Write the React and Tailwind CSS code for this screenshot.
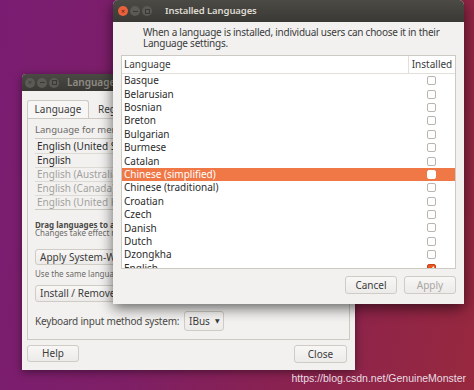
import React from 'react';

const font = { fontFamily: '"Noto Sans", "DejaVu Sans", sans-serif' };

const languages = [
  'Basque', 'Belarusian', 'Bosnian', 'Breton', 'Bulgarian', 'Burmese', 'Catalan',
  'Chinese (simplified)', 'Chinese (traditional)', 'Croatian', 'Czech', 'Danish',
  'Dutch', 'Dzongkha', 'English',
];

const TitleButtons = ({ active }) => (
  <div className="flex items-center gap-[2px]">
    <span className={`w-[10px] h-[10px] rounded-full flex items-center justify-center text-[7px] leading-none ${active ? 'bg-[#e8603c] text-[#5a1a0a]' : 'bg-[#5b5a55] text-[#3a3935]'}`}>×</span>
    <span className="w-[10px] h-[10px] rounded-full bg-[#5b5a55] flex items-center justify-center">
      <span className="w-[5px] h-[1px] bg-[#3a3935]" />
    </span>
    <span className="w-[10px] h-[10px] rounded-full bg-[#5b5a55] flex items-center justify-center">
      <span className="w-[5px] h-[5px] border border-[#3a3935]" />
    </span>
  </div>
);

const Button = ({ children, className = '', disabled }) => (
  <div className={`flex items-center justify-center border border-[#cfcbc5] rounded-[3px] bg-gradient-to-b from-[#f8f7f6] to-[#edebe9] text-[10px] ${disabled ? 'text-[#a8a6a2]' : 'text-[#3c3c3c]'} ${className}`}>
    {children}
  </div>
);

const Checkbox = ({ checked, onOrange }) => (
  <span className={`w-[9px] h-[9px] rounded-[2px] border flex items-center justify-center ${checked ? 'bg-[#e95420] border-[#c4461a]' : onOrange ? 'bg-white border-white' : 'bg-white border-[#b9b5ae]'}`}>
    {checked && (
      <svg width="7" height="7" viewBox="0 0 8 8">
        <path d="M1.2 4.2 L3.2 6.2 L6.8 1.8" stroke="white" strokeWidth="1.6" fill="none" />
      </svg>
    )}
  </span>
);

const BackWindow = () => (
  <div className="absolute left-[22px] top-[74px] w-[333px] h-[296px] flex flex-col bg-[#f2f1f0] rounded-t-[4px] shadow-[0_2px_8px_rgba(0,0,0,0.45)]">
    <div className="h-[17px] bg-gradient-to-b from-[#4a4944] to-[#3a3935] rounded-t-[4px] flex items-center px-[3px] gap-[8px]">
      <TitleButtons />
      <span className="text-[10px] font-semibold text-[#8f8c85]">Language Support</span>
    </div>
    <div className="flex-1 flex flex-col px-[5px] pt-[9px]">
      <div className="flex text-[10px] text-[#3c3c3c]">
        <div className="w-[62px] h-[18px] border border-b-0 border-[#cdc9c3] rounded-t-[3px] bg-[#f7f6f5] flex items-center justify-center">Language</div>
        <div className="px-[9px] h-[18px] flex items-center">Regional Formats</div>
      </div>
      <div className="h-[222px] border border-[#cdc9c3] bg-[#f2f1f0] flex flex-col px-[7px] pt-[4px] text-[#3c3c3c]">
        <div className="text-[9.5px] text-[#6c6a66]">Language for menus and windows:</div>
        <div className="mt-[1px] border-y border-[#cdc9c3] text-[10px]">
          {['English (United States)', 'English', 'English (Australia)', 'English (Canada)', 'English (United Kingdom)'].map((l, i) => (
            <div key={l} className={`h-[14px] flex items-center pl-[2px] ${i > 0 ? 'border-t border-[#dedad5]' : ''} ${i > 1 ? 'text-[#a3a19d]' : 'text-[#2c2c2c]'}`}>{l}</div>
          ))}
        </div>
        <div className="mt-[11px] text-[8px] leading-[8px] font-bold text-[#4a4946]">Drag languages to arrange them in order of preference.</div>
        <div className="text-[8px] leading-[8px] text-[#6c6a66]">Changes take effect next time you log in.</div>
        <Button className="mt-[12px] w-[150px] h-[16px] justify-start pl-[4px]">Apply System-Wide</Button>
        <div className="mt-[3px] text-[8px] text-[#6c6a66]">Use the same language choices for startup and the login screen.</div>
        <Button className="mt-[5px] w-[180px] h-[17px] justify-start pl-[4px]">Install / Remove Languages...</Button>
        <div className="mt-[9px] flex items-center gap-[5px]">
          <span className="text-[10px] tracking-[-0.2px] text-[#4a4946]">Keyboard input method system:</span>
          <Button className="w-[40px] h-[20px] gap-[5px]">IBus <span className="text-[6px]">▼</span></Button>
        </div>
      </div>
      <div className="flex justify-between pt-[5px] pr-[3px]">
        <Button className="w-[52px] h-[17px]">Help</Button>
        <Button className="w-[53px] h-[18px]">Close</Button>
      </div>
    </div>
  </div>
);

const FrontWindow = () => (
  <div className="absolute left-[113px] top-0 w-[351px] h-[304px] flex flex-col bg-[#f2f1f0] rounded-t-[5px] shadow-[0_4px_14px_rgba(0,0,0,0.6)]">
    <div className="h-[22px] bg-gradient-to-b from-[#4b4a45] to-[#3a3935] rounded-t-[5px] flex items-center px-[5px] gap-[13px]">
      <TitleButtons active />
      <span className="text-[9.5px] font-semibold tracking-[-0.1px] text-[#dfdbd2]">Installed Languages</span>
    </div>
    <div className="flex-1 flex flex-col px-[8px]">
      <div className="pl-[22px] pt-[5px] text-[10px] leading-[11px] tracking-[-0.25px] text-[#3c3c3c] whitespace-nowrap">
        When a language is installed, individual users can choose it in their<br />Language settings.
      </div>
      <div className="mt-[6px] h-[214px] border border-[#cdc9c3] bg-white overflow-hidden flex flex-col">
        <div className="h-[18px] flex border-b border-[#e2dfdb] text-[10px] text-[#3c3c3c] shrink-0">
          <div className="flex-1 flex items-center pl-[2px]">Language</div>
          <div className="w-[47px] flex items-center justify-center border-l border-[#e2dfdb]">Installed</div>
        </div>
        {languages.map((l) => {
          const sel = l === 'Chinese (simplified)';
          return (
            <div key={l} className={`h-[13.4px] shrink-0 flex items-center text-[10px] ${sel ? 'bg-[#f07746] text-white' : 'text-[#2c2c2c]'}`}>
              <div className="flex-1 pl-[2px]">{l}</div>
              <div className="w-[47px] flex justify-center">
                <Checkbox checked={l === 'English'} onOrange={sel} />
              </div>
            </div>
          );
        })}
      </div>
      <div className="flex justify-end gap-[7px] pt-[7px]">
        <Button className="w-[52px] h-[18px]">Cancel</Button>
        <Button className="w-[52px] h-[18px]" disabled>Apply</Button>
      </div>
    </div>
  </div>
);

export default function App() {
  return (
    <div className="relative w-[474px] h-[390px] overflow-hidden bg-[linear-gradient(100deg,#7a1d72_0%,#7e1f66_35%,#8a2250_65%,#97283e_100%)]" style={font}>
      <BackWindow />
      <FrontWindow />
      <div className="absolute right-[8px] bottom-[3px] text-[10.5px] text-[#e8dde2]" style={{ fontFamily: '"Liberation Sans", Arial, sans-serif' }}>
        https://blog.csdn.net/GenuineMonster
      </div>
    </div>
  );
}
